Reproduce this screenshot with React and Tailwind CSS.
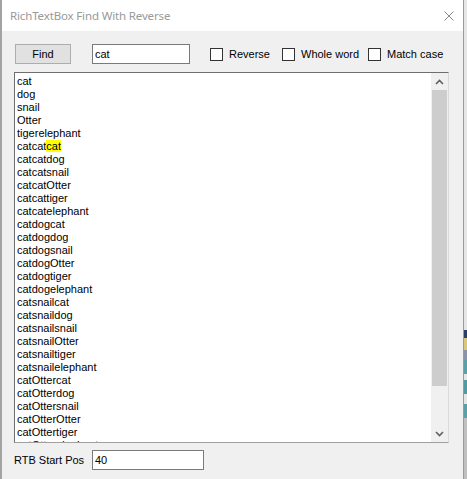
import React from "react";

const words = ["cat", "dog", "snail", "Otter", "tiger", "elephant"];

function buildLines() {
  const lines = ["cat", "dog", "snail", "Otter", "tigerelephant"];
  for (const b of ["cat", "dog", "snail", "Otter"]) {
    for (const c of words) {
      lines.push("cat" + b + c);
    }
  }
  return lines.slice(0, 29);
}

const Chevron = ({ up }) => (
  <svg width="9" height="6" viewBox="0 0 9 6">
    <path
      d={up ? "M1 5 L4.5 1.5 L8 5" : "M1 1 L4.5 4.5 L8 1"}
      fill="none"
      stroke="#606060"
      strokeWidth="1.6"
    />
  </svg>
);

const CheckGroup = ({ label, w }) => (
  <div className={`flex items-center shrink-0 ${w}`}>
    <div className="w-[13px] h-[13px] border border-[#333333] bg-white shrink-0" />
    <span className="ml-[6px] text-[11px] leading-[13px] text-black">{label}</span>
  </div>
);

export default function App() {
  const lines = buildLines();
  return (
    <div
      className="w-[467px] h-[479px] flex overflow-hidden"
      style={{ fontFamily: '"Liberation Sans", Arial, sans-serif' }}
    >
      <div className="w-[2px] shrink-0 bg-[#a3a3a3]" />
      <div className="w-[461px] shrink-0 flex flex-col bg-[#f0f0f0]">
        <div className="h-[31px] shrink-0 bg-white flex items-center justify-between pl-[8px] pr-[9px]">
          <span
            className="text-[11.5px] text-[#999999]"
            style={{ fontFamily: '"Noto Sans", "Open Sans", sans-serif', letterSpacing: "-0.15px" }}
          >
            RichTextBox Find With Reverse
          </span>
          <svg width="10" height="10" viewBox="0 0 10 10">
            <path d="M0.5 0.5 L9.5 9.5 M9.5 0.5 L0.5 9.5" stroke="#8a8a8a" strokeWidth="1" fill="none" />
          </svg>
        </div>
        <div className="flex items-center h-[20px] mt-[13px] pl-[13px]">
          <div className="w-[56px] h-[20px] shrink-0 border border-[#adadad] bg-[#e1e1e1] flex items-center justify-center text-[11px] text-black">
            Find
          </div>
          <div className="ml-[21px] w-[98px] h-[20px] shrink-0 border border-[#7a7a7a] bg-white flex items-center pl-[2px] text-[11px] text-black">
            cat
          </div>
          <div className="ml-[20px] flex items-center">
            <CheckGroup label="Reverse" w="w-[72px]" />
            <CheckGroup label="Whole word" w="w-[86px]" />
            <CheckGroup label="Match case" w="w-[80px]" />
          </div>
        </div>
        <div className="mt-[8px] ml-[12px] w-[435px] h-[371px] shrink-0 flex border-t border-l border-[#6e6e6e] border-b-[#a0a0a0] border-r border-b border-r-[#dadada] bg-white">
          <div className="flex-1 overflow-hidden pt-[2px] pl-[2px] text-[11px] leading-[13px] text-black">
            {lines.map((l, i) =>
              i === 5 ? (
                <div key={i} className="h-[13px] whitespace-nowrap">
                  catcat<span className="bg-[#ffff00]">cat</span>
                </div>
              ) : (
                <div key={i} className="h-[13px] whitespace-nowrap">
                  {l}
                </div>
              )
            )}
          </div>
          <div className="w-[17px] shrink-0 flex flex-col bg-[#f0f0f0]">
            <div className="h-[17px] shrink-0 flex items-center justify-center">
              <Chevron up />
            </div>
            <div className="flex-1 flex flex-col">
              <div className="h-[296px] mx-[1px] bg-[#cdcdcd]" />
            </div>
            <div className="h-[17px] shrink-0 flex items-center justify-center">
              <Chevron />
            </div>
          </div>
        </div>
        <div className="flex items-center h-[20px] mt-[7px] pl-[12px]">
          <div className="w-[78px] shrink-0 text-[11px] text-black">RTB Start Pos</div>
          <div className="w-[112px] h-[20px] shrink-0 border border-[#7a7a7a] bg-white flex items-center pl-[2px] text-[11px] text-black">
            40
          </div>
        </div>
      </div>
      <div className="w-[1px] shrink-0 bg-[#9a9a9a]" />
      <div className="w-[3px] shrink-0 flex flex-col bg-[#e6e6e6]">
        <div className="h-[330px]" />
        <div className="h-[8px] bg-[#2a3f66]" />
        <div className="h-[12px] bg-[#d9c77a]" />
        <div className="h-[10px] bg-[#8a93a8]" />
        <div className="h-[14px] bg-[#5aa0a8]" />
        <div className="h-[6px] bg-[#e6e6e6]" />
        <div className="h-[14px] bg-[#4f9aa3]" />
        <div className="h-[10px] bg-[#e6e6e6]" />
        <div className="h-[14px] bg-[#5aa0a8]" />
        <div className="flex-1 bg-[#c0c0c0]" />
      </div>
    </div>
  );
}
